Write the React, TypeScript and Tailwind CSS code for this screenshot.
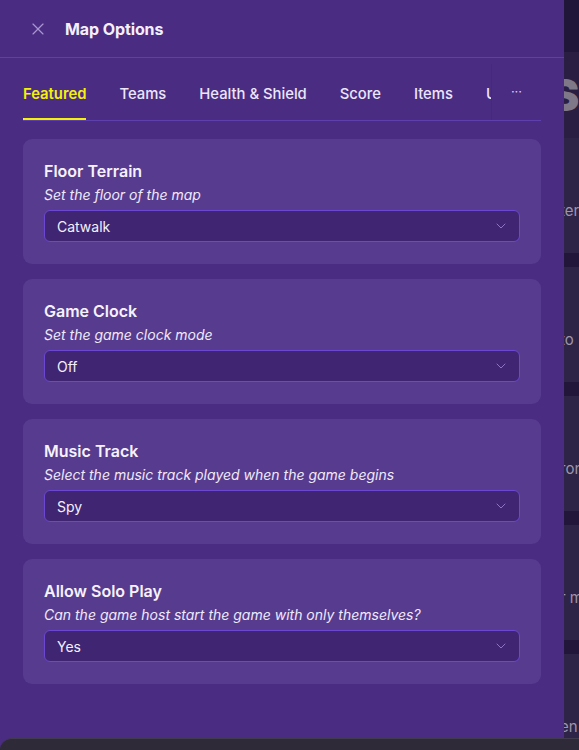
import { ChevronDown, X } from "lucide-react";

const options = [
  { title: "Floor Terrain", desc: "Set the floor of the map", value: "Catwalk" },
  { title: "Game Clock", desc: "Set the game clock mode", value: "Off" },
  { title: "Music Track", desc: "Select the music track played when the game begins", value: "Spy" },
  { title: "Allow Solo Play", desc: "Can the game host start the game with only themselves?", value: "Yes" },
];

const tabs = ["Featured", "Teams", "Health & Shield", "Score", "Items", "Upgrades"];

const bgRows = ["ter", "to", "ron", "r m", "en"];

export default function App() {
  return (
    <div
      className="flex h-[750px] w-[579px] flex-col overflow-hidden bg-[#231839] text-white"
      style={{ fontFamily: "Inter, 'Noto Sans', sans-serif" }}
    >
      <div className="flex min-h-0 flex-1">
        {/* drawer */}
        <div className="flex w-[564px] shrink-0 flex-col bg-[#4a2c83]">
          <div className="flex h-[58px] items-center gap-[17px] border-b border-[#5d3fae] pl-[28px]">
            <X className="h-[20px] w-[20px] text-[#a995d0]" strokeWidth={1.4} />
            <h2 className="text-[16px] font-bold tracking-[-0.1px] text-[#f4f0fb]">Map Options</h2>
          </div>

          <div className="mx-[23px] mt-[6px] flex h-[57px] border-b border-[#5e3fae]">
            <div className="flex min-w-0 flex-1 gap-[33px] overflow-hidden">
              {tabs.map((t, i) => (
                <div
                  key={t}
                  className={
                    i === 0
                      ? "flex shrink-0 items-center border-b-2 border-[#f5f10c] pt-[6px] text-[14.8px] font-semibold text-[#f5f10c]"
                      : "flex shrink-0 items-center pt-[4px] text-[14.8px] font-medium text-[#ece6f8]"
                  }
                >
                  {t}
                </div>
              ))}
            </div>
            <div className="flex w-[50px] shrink-0 items-center justify-center border-l border-[#46297c] bg-[#4a2c83] pb-[1px] text-[13px] text-[#d8cdef]">
              ···
            </div>
          </div>

          <div className="flex flex-col gap-[15px] px-[23px] pt-[18px]">
            {options.map((o) => (
              <div key={o.title} className="rounded-[9px] bg-[#573b8e] px-[21px] pb-[22px] pt-[21px]">
                <div className="text-[16px] font-semibold leading-[22px] text-[#f6f2fc]">{o.title}</div>
                <div className="mt-[3px] text-[14px] italic leading-[20px] text-[#efe9f9]">{o.desc}</div>
                <div className="mt-[5px] flex h-[32px] items-center justify-between rounded-[6px] border border-[#6c47d2] bg-[#3f2572] pl-[12px] pr-[10px]">
                  <span className="text-[14px] text-[#f4f0fb]">{o.value}</span>
                  <ChevronDown className="h-[16px] w-[16px] text-[#8f74c6]" strokeWidth={1.5} />
                </div>
              </div>
            ))}
          </div>
        </div>

        {/* background page peeking out */}
        <div className="flex min-w-0 flex-1 flex-col overflow-hidden">
          <div className="h-[52px] shrink-0 bg-[#20163a]" />
          <div className="flex h-[86px] shrink-0 items-center bg-[#2a1f43]">
            <span className="-ml-[14px] text-[44px] font-black leading-none text-[#7e7888]">S</span>
          </div>
          <div className="flex flex-col gap-[14px] bg-[#22173a]">
            {bgRows.map((r) => (
              <div key={r} className="flex h-[115px] shrink-0 items-start bg-[#2e2448] pt-[63px]">
                <span className="-ml-[4px] whitespace-nowrap text-[15px] leading-[20px] text-[#9d96ab]">{r}</span>
              </div>
            ))}
          </div>
        </div>
      </div>
      <div className="h-[12px] shrink-0 bg-[#4a2c83]">
        <div className="h-full rounded-tl-[16px] border-t border-[#403b4d] bg-[#2e2a37]" />
      </div>
    </div>
  );
}
